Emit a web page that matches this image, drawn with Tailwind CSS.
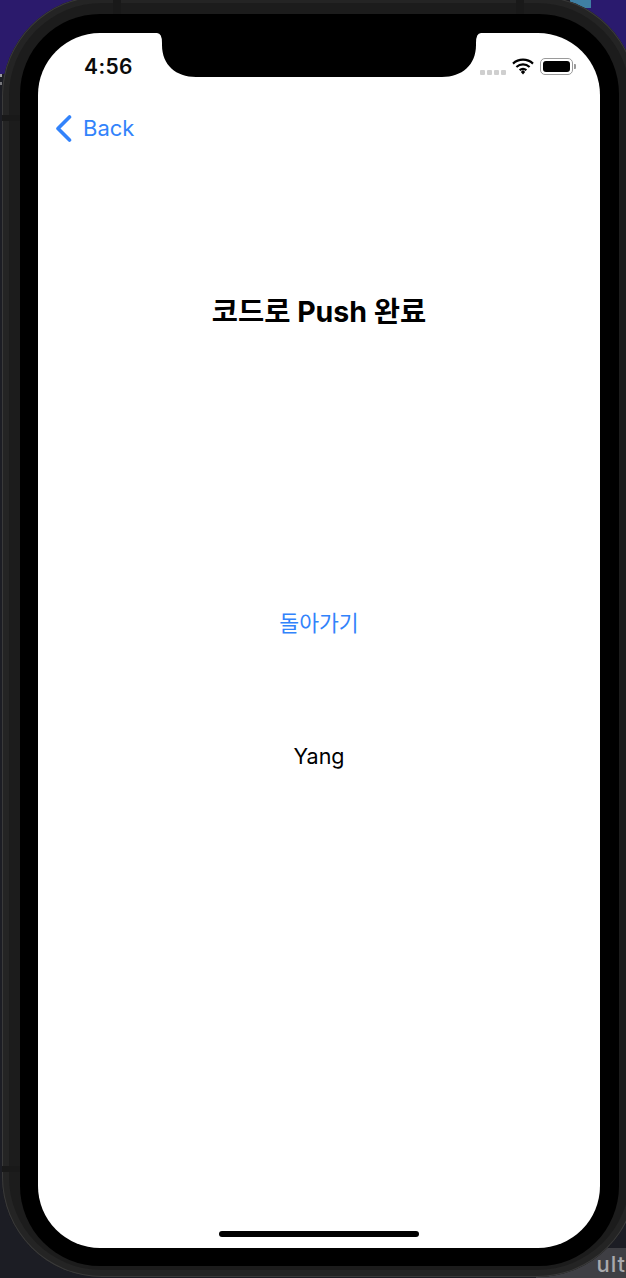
<!DOCTYPE html>
<html lang="ko">
<head>
    <meta charset="UTF-8">
    <meta name="viewport" content="width=device-width, initial-scale=1.0">
    <title>Simulator</title>
    <script src="https://cdn.jsdelivr.net/npm/@tailwindcss/browser@4"></script>
</head>
<body class="bg-[#1c1d24]">
    <div class="relative w-[626px] h-[1278px] overflow-hidden font-['Inter','Noto_Sans_CJK_KR',sans-serif]">
        <!-- desktop behind the simulator -->
        <div class="absolute left-0 top-0 w-[80px] h-[74px] bg-[#2b1a6c]"></div>
        <div class="absolute left-0 top-[74px] w-[2px] h-[3px] bg-[#9a9aa0]"></div>
        <div class="absolute left-0 top-[82px] w-[2px] h-[3px] bg-[#77777c]"></div>
        <div class="absolute right-0 top-0 w-[56px] h-[80px] bg-[#2a1a6e]"></div>
        <div class="absolute left-[570px] top-0 w-[21px] h-[8px] bg-[#3f7fa3]"></div>
        <div class="absolute right-0 bottom-0 w-[90px] h-[30px] bg-[#3f3f44]"></div>
        <div class="absolute right-0 bottom-0 text-[22px] leading-[28px] tracking-[1px] font-medium text-[#a9a9ad]">ult</div>

        <!-- device frame -->
        <div class="relative ml-[2px] mt-[-4px] w-[635px] h-[1281px] rounded-[100px] bg-[#1c1c1c] pt-[18px] pl-[18px] pr-[18px] pb-[11px] shadow-[inset_0_0_0_1px_#3a3a3a,inset_0_0_0_7px_#242424]">
            <div class="absolute left-[111px] top-0 w-[8px] h-[18px] bg-[#191919]"></div>
            <div class="absolute left-[514px] top-0 w-[8px] h-[18px] bg-[#191919]"></div>
            <div class="absolute left-0 top-[119px] w-[18px] h-[6px] bg-[#191919]"></div>
            <div class="absolute left-0 top-[1170px] w-[18px] h-[6px] bg-[#191919]"></div>

            <div class="h-full rounded-[80px] bg-black pt-[19px] pl-[18px] pr-[19px] pb-[18px]">
                <!-- screen -->
                <div class="relative h-full rounded-[62px] bg-white flex flex-col items-stretch overflow-hidden">
                    <svg class="absolute left-[116px] top-0" width="330" height="44" viewBox="0 0 330 44">
                        <path d="M3 0Q8 0 8 10V12C8 32 22 44 42 44H288C308 44 322 32 322 12V10Q322 0 327 0Z" fill="#000"/>
                    </svg>

                    <!-- status bar -->
                    <div class="flex items-center h-[33px] mt-[17px] pl-[46px] pr-[24px]">
                        <span class="text-[21px] leading-[33px] font-semibold text-[#0b0b0b] tracking-[0.4px]">4:56</span>
                        <div class="ml-auto flex items-center">
                            <div class="flex gap-[2px] mt-[12px]">
                                <span class="w-[5px] h-[5px] rounded-[1px] bg-[#cfcfcf]"></span>
                                <span class="w-[5px] h-[5px] rounded-[1px] bg-[#cfcfcf]"></span>
                                <span class="w-[5px] h-[5px] rounded-[1px] bg-[#cfcfcf]"></span>
                                <span class="w-[5px] h-[5px] rounded-[1px] bg-[#cfcfcf]"></span>
                            </div>
                            <svg class="ml-[6px] mt-[-1px]" width="22" height="17" viewBox="0 0 22 17">
                                <path d="M1 5.6C6.6 .4 15.4 .4 21 5.6M4.4 9C8.2 5.6 13.8 5.6 17.6 9M7.6 12.2C9.6 10.6 12.4 10.6 14.4 12.2" fill="none" stroke="#000" stroke-width="2.2"/>
                                <path d="M8.8 14L11 11.9L13.2 14L11 16.4Z" fill="#000"/>
                            </svg>
                            <div class="ml-[6px] w-[33px] h-[17px] rounded-[5px] border-[1.5px] border-[#9a9a9a] p-[2px]">
                                <div class="h-full rounded-[3px] bg-black"></div>
                            </div>
                            <div class="ml-[1px] w-[2px] h-[5px] rounded-r-[1px] bg-[#9a9a9a]"></div>
                        </div>
                    </div>

                    <!-- nav bar -->
                    <div class="flex items-center h-[40px] mt-[25px] pl-[17px] text-[#3283fb]">
                        <svg width="17" height="27" viewBox="0 0 17 27">
                            <path d="M14.5 2L3 13.5L14.5 25" fill="none" stroke="#3283fb" stroke-width="3.6" stroke-linecap="round" stroke-linejoin="round"/>
                        </svg>
                        <span class="ml-[11px] text-[22px] leading-[40px]">Back</span>
                    </div>

                    <h1 class="mt-[146px] text-center text-[28.5px] leading-[36px] font-bold text-black">코드로 Push 완료</h1>
                    <button class="mt-[278px] text-center text-[21.6px] leading-[30px] text-[#3283fb]">돌아가기</button>
                    <p class="mt-[103px] text-center text-[21.5px] leading-[30px] text-black">Yang</p>

                    <!-- home indicator -->
                    <div class="mt-auto mb-[11px] mx-auto w-[200px] h-[6px] rounded-full bg-black"></div>
                </div>
            </div>
        </div>
    </div>
</body>
</html>
